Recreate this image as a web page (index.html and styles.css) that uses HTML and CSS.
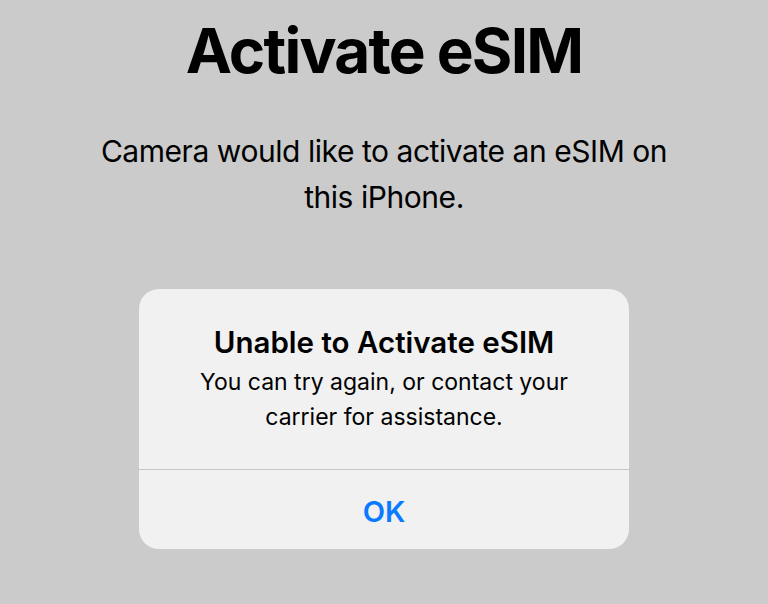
FILE: index.html
```html
<!DOCTYPE html>
<html lang="en">

<head>
    <meta charset="UTF-8" />
    <meta name="viewport" content="width=device-width, initial-scale=1.0" />
    <title>Activate eSIM</title>
    <link rel="stylesheet" href="styles.css">
</head>

<body>
    <div class="screen">
        <h1 class="title">Activate eSIM</h1>
        <p class="lead">Camera would like to activate an eSIM on<br>this iPhone.</p>

        <div class="alert">
            <div class="alert-body">
                <h2 class="alert-title">Unable to Activate eSIM</h2>
                <p class="alert-msg">You can try again, or contact your<br>carrier for assistance.</p>
            </div>
            <button class="alert-btn">OK</button>
        </div>
    </div>
</body>

</html>
```

FILE: styles.css
```css
html {
    -webkit-font-smoothing: antialiased;
    font-family: Inter, "Noto Sans", sans-serif;
    box-sizing: border-box;
    height: 100%;
}

*,
*:before,
*:after {
    box-sizing: inherit;
}

:root {
    --bg: #cbcbcb;
    --sheet: #f1f1f1;
    --line: #c6c6c6;
    --blue: #0a7bff;
}

body {
    margin: 0;
    background: var(--bg);
    color: #000;
}

.screen {
    display: flex;
    flex-direction: column;
    align-items: center;
    text-align: center;
}

.title {
    margin: 14px 0 0;
    font-size: 62px;
    font-weight: 700;
    line-height: 74px;
    letter-spacing: -1.8px;
}

.lead {
    margin: 40px 0 0;
    font-size: 30px;
    font-weight: 400;
    line-height: 46px;
    letter-spacing: -0.45px;
}

.alert {
    margin-top: 69px;
    width: 490px;
    background: var(--sheet);
    border-radius: 20px;
    overflow: hidden;
}

.alert-body {
    padding: 35px 20px 34px;
    border-bottom: 1px solid var(--line);
}

.alert-title {
    margin: 0;
    font-size: 29.5px;
    font-weight: 600;
    line-height: 36px;
}

.alert-msg {
    margin: 5px 0 0;
    font-size: 23px;
    line-height: 35px;
}

.alert-btn {
    display: block;
    width: 100%;
    height: 79px;
    border: 0;
    padding: 3px 0 0;
    background: none;
    font-family: inherit;
    font-size: 29px;
    font-weight: 600;
    color: var(--blue);
    cursor: pointer;
}
```
